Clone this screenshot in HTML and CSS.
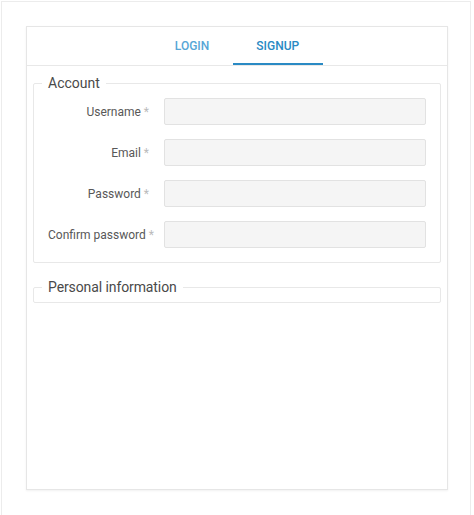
FILE: index.html
```html
<!DOCTYPE html>
<html lang="en">
<head>
<meta charset="utf-8">
<title>Signup</title>
<link rel="stylesheet" href="styles.css">
</head>
<body>
<div class="frame">
  <div class="card">
    <div class="tabs">
      <div class="tab">LOGIN</div>
      <div class="tab active">SIGNUP</div>
    </div>
    <div class="body">
      <fieldset class="group">
        <legend>Account</legend>
        <div class="form">
          <label class="label">Username <span class="req">*</span></label>
          <div class="input"></div>
          <label class="label">Email <span class="req">*</span></label>
          <div class="input"></div>
          <label class="label">Password <span class="req">*</span></label>
          <div class="input"></div>
          <label class="label">Confirm password <span class="req">*</span></label>
          <div class="input"></div>
        </div>
      </fieldset>
      <fieldset class="group empty">
        <legend>Personal information</legend>
      </fieldset>
    </div>
  </div>
</div>
</body>
</html>
```

FILE: styles.css
```css
* { box-sizing: border-box; }
html, body { margin: 0; padding: 0; background: #fff; }
body { font-family: Roboto, "Noto Sans", Arial, sans-serif; color: #555; }

.frame {
  margin: 1px 0 0 1px;
  width: 470px;
  height: 514px;
  border: 1px solid #ececec;
  border-bottom: none;
  padding: 24px 0 0 24px;
}

.card {
  width: 422px;
  height: 464px;
  border: 1px solid #e6e6e6;
  box-shadow: 0 1px 2px rgba(0,0,0,0.06);
  background: #fff;
}

.tabs {
  display: flex;
  justify-content: center;
  height: 39px;
  border-bottom: 1px solid #e8e8e8;
}
.tab {
  padding: 1px 23.5px 0;
  font-size: 12px;
  font-weight: 500;
  color: #56a6d6;
  height: 38px;
  line-height: 37px;
  border-bottom: 2px solid transparent;
}
.tab.active {
  color: #2a8ac4;
  border-bottom-color: #2a8ac4;
}

.body {
  padding: 9px 6px 0 6px;
}

.group {
  margin: 0;
  padding: 6px 14px 14px 14px;
  border: 1px solid #e8e8e8;
  border-radius: 2px;
  min-width: 0;
}
.group legend {
  margin-left: -6px;
  padding: 0 6px;
  font-size: 14px;
  line-height: 17px;
  color: #4a4a4a;
}
.group.empty {
  margin-top: 16px;
  padding: 0;
  height: 24px;
}
.group.empty legend {
  margin-left: 8px;
  letter-spacing: -0.1px;
}

.form {
  display: grid;
  grid-template-columns: 101px 1fr;
  column-gap: 15px;
  row-gap: 14px;
  align-items: center;
}
.label {
  text-align: right;
  white-space: nowrap;
  font-size: 12px;
  color: #585858;
}
.req { color: #bbb; }
.input {
  height: 27px;
  background: #f5f5f5;
  border: 1px solid #e2e2e2;
  border-radius: 2px;
}
```
